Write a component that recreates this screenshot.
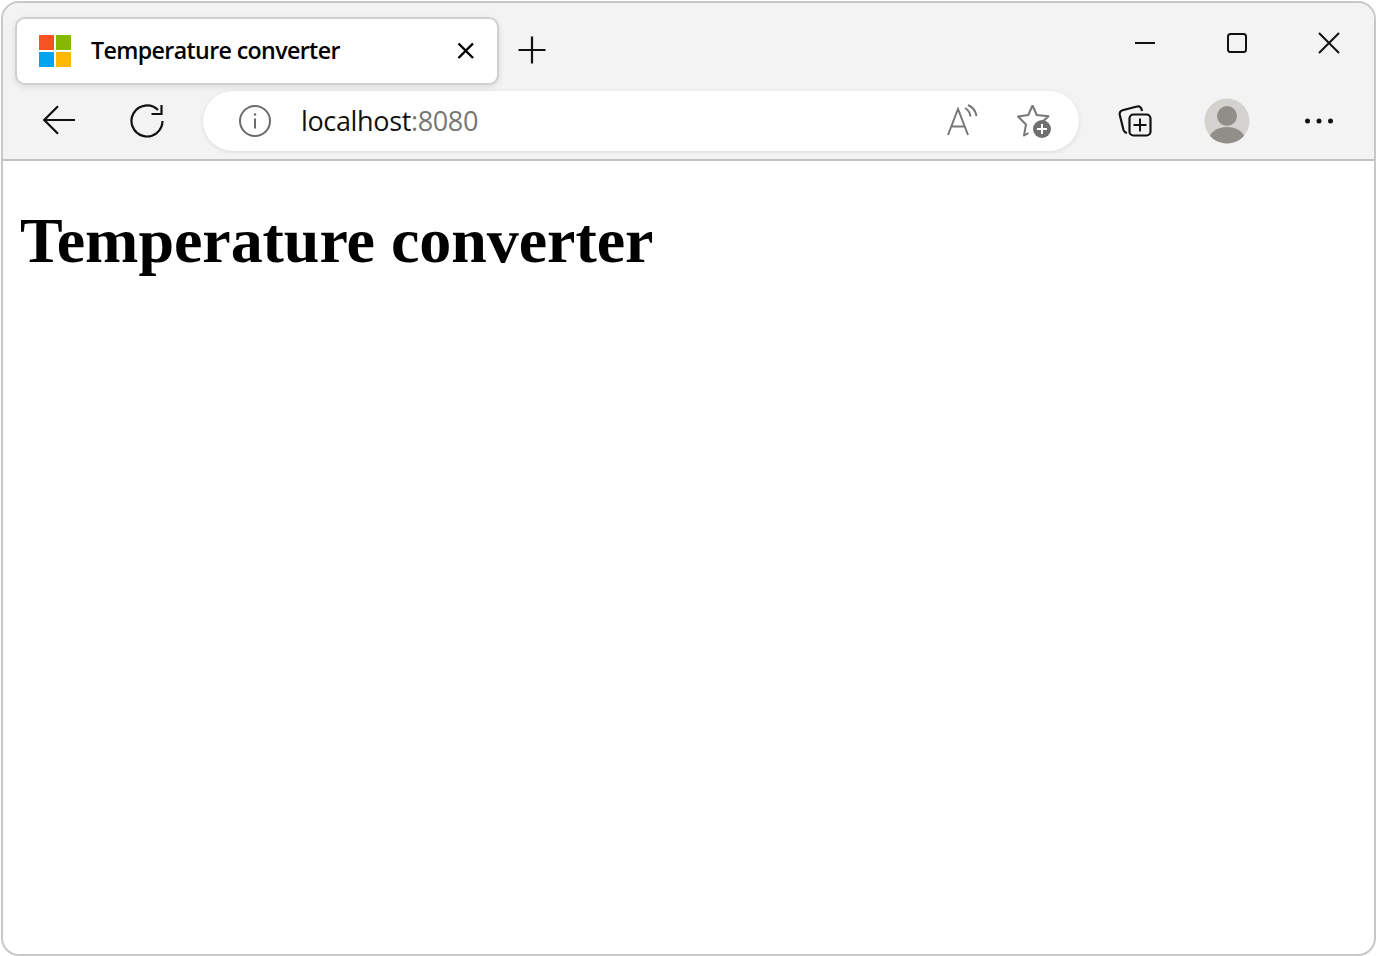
<div class="window">
  <header class="chrome">
    <div class="tabstrip">
      <div class="tab">
        <svg class="logo" width="34" height="34" viewBox="0 0 34 34" aria-hidden="true">
          <rect x="1" y="1" width="15" height="15" fill="#f65223"/>
          <rect x="18" y="1" width="15" height="15" fill="#84b900"/>
          <rect x="1" y="18" width="15" height="15" fill="#00a4ef"/>
          <rect x="18" y="18" width="15" height="15" fill="#ffb900"/>
        </svg>
        <span class="tab-title">Temperature converter</span>
        <svg class="tab-close" width="20" height="20" viewBox="0 0 20 20" aria-hidden="true">
          <path d="M2.5 2.5 17 17M17 2.5 2.5 17" stroke="#000" stroke-width="2.4" fill="none"/>
        </svg>
      </div>
      <svg class="newtab" width="30" height="30" viewBox="0 0 30 30" aria-hidden="true">
        <path d="M15 1.5V28.5M1.5 15H28.5" stroke="#111" stroke-width="2.2" fill="none"/>
      </svg>
      <div class="winctl">
        <div class="ctl"><svg width="24" height="24" viewBox="0 0 24 24" aria-hidden="true"><path d="M2 12H22" stroke="#111" stroke-width="2"/></svg></div>
        <div class="ctl"><svg width="24" height="24" viewBox="0 0 24 24" aria-hidden="true"><rect x="3" y="3" width="18" height="18" rx="2.5" stroke="#111" stroke-width="2" fill="none"/></svg></div>
        <div class="ctl"><svg width="24" height="24" viewBox="0 0 24 24" aria-hidden="true"><path d="M2 2 22 22M22 2 2 22" stroke="#111" stroke-width="2" fill="none"/></svg></div>
      </div>
    </div>
    <div class="toolbar">
      <div class="tool"><svg width="36" height="36" viewBox="0 0 36 36" aria-hidden="true"><path d="M34 17H3M17 3.3 3.2 17 17 30.7" stroke="#111" stroke-width="2.2" fill="none"/></svg></div>
      <div class="tool"><svg width="36" height="36" viewBox="0 0 36 36" aria-hidden="true"><path d="M33.5 18A15.5 15.5 0 1 1 29 7" stroke="#111" stroke-width="2.2" fill="none"/><path d="M32.5 2V11H22.5" stroke="#111" stroke-width="2.2" fill="none"/></svg></div>
      <div class="address">
        <svg class="info" width="34" height="34" viewBox="0 0 34 34" aria-hidden="true">
          <circle cx="17" cy="17" r="15" stroke="#6b6b6b" stroke-width="2" fill="none"/>
          <circle cx="17" cy="10.5" r="1.3" fill="#6b6b6b"/>
          <path d="M17 14.5V24.5" stroke="#6b6b6b" stroke-width="2"/>
        </svg>
        <span class="url">localhost<span class="port">:8080</span></span>
        <svg class="read" width="34" height="34" viewBox="0 0 34 34" aria-hidden="true">
          <path d="M2 31 12 5 22 31M5.5 22.5H18.5" stroke="#777" stroke-width="2" fill="none"/>
          <path d="M19 4C21.500 5.500 24 8.500 24.500 12.500M22 1C26.500 3 29.500 6.500 30.500 12" stroke="#777" stroke-width="2" fill="none"/>
        </svg>
        <svg class="star" width="36" height="36" viewBox="0 0 36 36" aria-hidden="true">
          <path d="M16.500 2.500 20.800 12 32.500 13.300 24.500 20.500M12.500 30 8 32.500 10 21.500 2 13.500 12.300 12 16.500 2.500" stroke="#777" stroke-width="2" fill="none" stroke-linejoin="round"/>
          <circle cx="26" cy="26" r="9" fill="#6f6f6f"/>
          <path d="M26 21V31M21 26H31" stroke="#fff" stroke-width="2"/>
        </svg>
      </div>
      <div class="tools-right">
        <div class="tool wide"><svg width="36" height="36" viewBox="0 0 36 36" aria-hidden="true">
          <path d="M10 30C8 29.500 7 28.500 6.500 27L2.800 12C2.300 9.500 3.500 8 5.500 7.300L20 3.500C23 2.800 24.500 4.500 25 8" stroke="#111" stroke-width="2.2" fill="none"/>
          <rect x="12.500" y="11.500" width="21" height="21" rx="4" stroke="#111" stroke-width="2.2" fill="#f3f3f3"/>
          <path d="M23 15.500V28.500M16.500 22H29.500" stroke="#111" stroke-width="2"/>
        </svg></div>
        <div class="tool wide"><svg width="46" height="46" viewBox="0 0 46 46" aria-hidden="true">
          <clipPath id="avatar-clip"><circle cx="23" cy="23" r="22.500"/></clipPath>
          <circle cx="23" cy="23" r="22.500" fill="#d3d2ce"/>
          <circle cx="23" cy="18" r="10" fill="#918d89"/>
          <ellipse cx="23" cy="43" rx="18.500" ry="14" fill="#918d89" clip-path="url(#avatar-clip)"/>
        </svg></div>
        <div class="tool wide"><svg width="30" height="8" viewBox="0 0 30 8" aria-hidden="true">
          <circle cx="3.500" cy="4" r="2.500" fill="#111"/><circle cx="15" cy="4" r="2.500" fill="#111"/><circle cx="26.500" cy="4" r="2.500" fill="#111"/>
        </svg></div>
      </div>
    </div>
  </header>
  <main class="page">
    <h1>Temperature converter</h1>
  </main>
</div>

<style>
  :global(body) {
    margin: 0;
    background: #fff;
  }
  .window {
    box-sizing: border-box;
    width: 1375px;
    height: 955px;
    margin: 1px 0 0 1px;
    border: 2px solid #c8c8c8;
    border-radius: 18px;
    overflow: hidden;
    background: #fff;
    display: flex;
    flex-direction: column;
  }
  .chrome {
    box-sizing: border-box;
    height: 158px;
    flex: none;
    background: #f3f3f3;
    border-bottom: 2px solid #c2c2c2;
  }
  .tabstrip {
    height: 88px;
    padding: 14px 0 0 12px;
    box-sizing: border-box;
    display: flex;
    align-items: flex-start;
  }
  .tab {
    box-sizing: border-box;
    width: 484px;
    height: 68px;
    padding: 0 21px;
    background: #fff;
    border: 2px solid #d0d0d0;
    border-radius: 10px;
    box-shadow: 0 2px 6px rgba(0, 0, 0, 0.1);
    display: flex;
    align-items: center;
  }
  .logo {
    flex: none;
  }
  .tab-title {
    margin-left: 19px;
    flex: 1;
    font: 600 23.2px/1 "Open Sans", sans-serif;
    color: #000;
    white-space: nowrap;
    letter-spacing: -0.62px;
  }
  .newtab {
    margin: 18px 0 0 18px;
    flex: none;
  }
  .winctl {
    margin: -14px -1px 0 auto;
    display: flex;
  }
  .ctl {
    width: 92px;
    height: 80px;
    display: flex;
    align-items: center;
    justify-content: center;
  }
  .toolbar {
    height: 68px;
    box-sizing: border-box;
    display: flex;
    align-items: flex-start;
    padding: 0 0 0 12px;
  }
  .tool {
    width: 88px;
    height: 60px;
    display: flex;
    align-items: center;
    justify-content: center;
    flex: none;
  }
  .tool.wide {
    width: 92px;
  }
  .tool svg,
  .ctl svg {
    display: block;
  }
  .address {
    box-sizing: border-box;
    margin-left: 12px;
    width: 876px;
    height: 60px;
    padding: 0 27px 0 35px;
    background: #fff;
    border-radius: 30px;
    box-shadow: 0 1px 4px rgba(0, 0, 0, 0.1);
    display: flex;
    align-items: center;
    flex: none;
  }
  .info {
    flex: none;
  }
  .url {
    margin: -2px 0 0 29px;
    flex: 1;
    font: 400 27px/1 "Open Sans", sans-serif;
    color: #111;
    white-space: nowrap;
    letter-spacing: -0.35px;
  }
  .port {
    color: #767676;
  }
  .read {
    flex: none;
    margin-right: 36px;
  }
  .star {
    flex: none;
  }
  .tools-right {
    display: flex;
    margin-left: 10px;
  }
  .page {
    flex: 1;
    padding: 16px 17px;
  }
  h1 {
    margin: 27px 0 0;
    font: 700 64px/1.15 "Liberation Serif", serif;
    letter-spacing: -0.05px;
    color: #000;
  }
</style>
